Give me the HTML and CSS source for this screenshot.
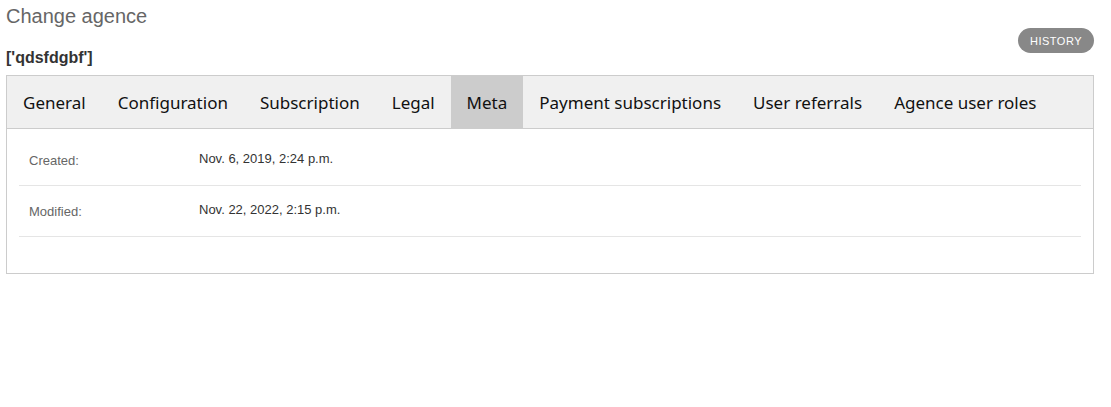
FILE: index.html
```html
<!DOCTYPE html>
<html lang="en">
<head>
<meta charset="utf-8">
<title>Change agence</title>
<link rel="stylesheet" href="styles.css">
</head>
<body>
<h1 class="page-title">Change agence</h1>
<div class="subheader">
  <h2 class="object-name">['qdsfdgbf']</h2>
  <a class="history-btn" href="#">History</a>
</div>
<div class="panel">
  <nav class="tabs">
    <a class="tab" href="#">General</a>
    <a class="tab" href="#">Configuration</a>
    <a class="tab" href="#">Subscription</a>
    <a class="tab" href="#">Legal</a>
    <a class="tab active" href="#">Meta</a>
    <a class="tab" href="#">Payment subscriptions</a>
    <a class="tab" href="#">User referrals</a>
    <a class="tab" href="#">Agence user roles</a>
  </nav>
  <div class="content">
    <div class="row">
      <div class="label">Created:</div>
      <div class="value">Nov. 6, 2019, 2:24 p.m.</div>
    </div>
    <div class="row">
      <div class="label">Modified:</div>
      <div class="value">Nov. 22, 2022, 2:15 p.m.</div>
    </div>
  </div>
</div>
</body>
</html>
```
FILE: styles.css
```css
html, body {
  background: #fff;
}
body {
  margin: 0;
  padding: 5px 17px 0 6px;
  font-family: "Liberation Sans", Arial, sans-serif;
  color: #333;
}
.page-title {
  margin: 0;
  font-size: 20px;
  line-height: 23px;
  font-weight: normal;
  color: #666;
}
.subheader {
  display: flex;
  justify-content: space-between;
  align-items: flex-start;
}
.object-name {
  margin: 21px 0 0 0;
  font-size: 16px;
  line-height: 18px;
  font-weight: bold;
  color: #333;
}
.history-btn {
  display: block;
  box-sizing: border-box;
  width: 76px;
  height: 25px;
  padding-top: 1px;
  line-height: 24px;
  border-radius: 13px;
  background: #888;
  color: #fff;
  text-decoration: none;
  text-transform: uppercase;
  font-size: 11px;
  letter-spacing: 0.5px;
  text-align: center;
}
.panel {
  margin-top: 8px;
  border: 1px solid #ccc;
}
.tabs {
  display: flex;
  background: #f0f0f0;
  border-bottom: 1px solid #ccc;
}
.tab {
  padding: 16px 16px 14px 16px;
  line-height: 22px;
  font-family: "Noto Sans", sans-serif;
  font-size: 17px;
  color: #111;
  text-decoration: none;
}
.tab.active {
  background: #ccc;
}
.content {
  padding: 6px 12px 36px 12px;
}
.row {
  display: flex;
  align-items: flex-start;
  height: 34px;
  padding-top: 16px;
  border-bottom: 1px solid #e5e5e5;
  font-size: 13px;
  line-height: 15px;
}
.label {
  width: 170px;
  padding-left: 10px;
  margin-top: 2px;
  color: #666;
}
.value {
  color: #333;
}
```
